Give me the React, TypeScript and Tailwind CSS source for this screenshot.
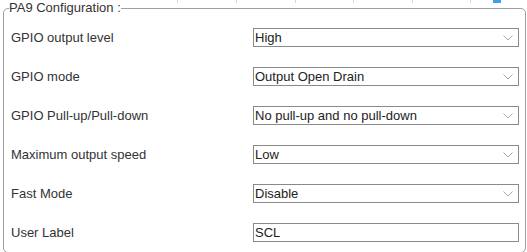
interface ConfigRow {
    label: string;
    value: string;
    kind: 'select' | 'text';
}

const rows: ConfigRow[] = [
    { label: 'GPIO output level', value: 'High', kind: 'select' },
    { label: 'GPIO mode', value: 'Output Open Drain', kind: 'select' },
    { label: 'GPIO Pull-up/Pull-down', value: 'No pull-up and no pull-down', kind: 'select' },
    { label: 'Maximum output speed', value: 'Low', kind: 'select' },
    { label: 'Fast Mode', value: 'Disable', kind: 'select' },
    { label: 'User Label', value: 'SCL', kind: 'text' },
];

// cut-off tab strip above the panel
const tabMarks = [177, 236, 295, 353, 412, 470];

function Chevron() {
    return (
        <svg width="10" height="6" viewBox="0 0 10 6" className="shrink-0">
            <polyline points="0.5,0.5 5,5 9.5,0.5" fill="none" stroke="#a8a8a8" strokeWidth="1" />
        </svg>
    );
}

export default function App() {
    return (
        <div
            className="relative w-[527px] h-[252px] bg-white overflow-hidden text-[13px] text-[#333333]"
            style={{ fontFamily: '"Liberation Sans", Arial, sans-serif' }}
        >
            <div className="absolute top-0 left-0 w-full h-[3px]">
                {tabMarks.map(x => (
                    <div key={x} className="absolute top-0 w-px h-[3px] bg-[#d4d6d8]" style={{ left: x }} />
                ))}
                <div className="absolute top-0 left-[493px] w-[8px] h-[3px] bg-[#3ba3e3]" />
            </div>

            <fieldset className="ml-[3px] w-[523px] h-[253px] border border-[#9ba1a6] rounded-[5px] pl-[5px] pr-[6px] pt-[12px]">
                <legend className="px-0 leading-[16px] text-[#333333]">PA9 Configuration :</legend>
                <div className="flex flex-col gap-[20px] pl-[2px]">
                    {rows.map(r => (
                        <div key={r.label} className="flex items-center h-[19px]">
                            <span className="w-[242px] shrink-0 leading-[19px] whitespace-nowrap">{r.label}</span>
                            <div className="flex items-center w-[266px] h-[19px] border border-[#8a8a8a] bg-white pl-[1px] pr-[5px]">
                                <span className="flex-1 leading-[17px] text-[#222222] whitespace-nowrap">{r.value}</span>
                                {r.kind === 'select' && <Chevron />}
                            </div>
                        </div>
                    ))}
                </div>
            </fieldset>
        </div>
    );
}
